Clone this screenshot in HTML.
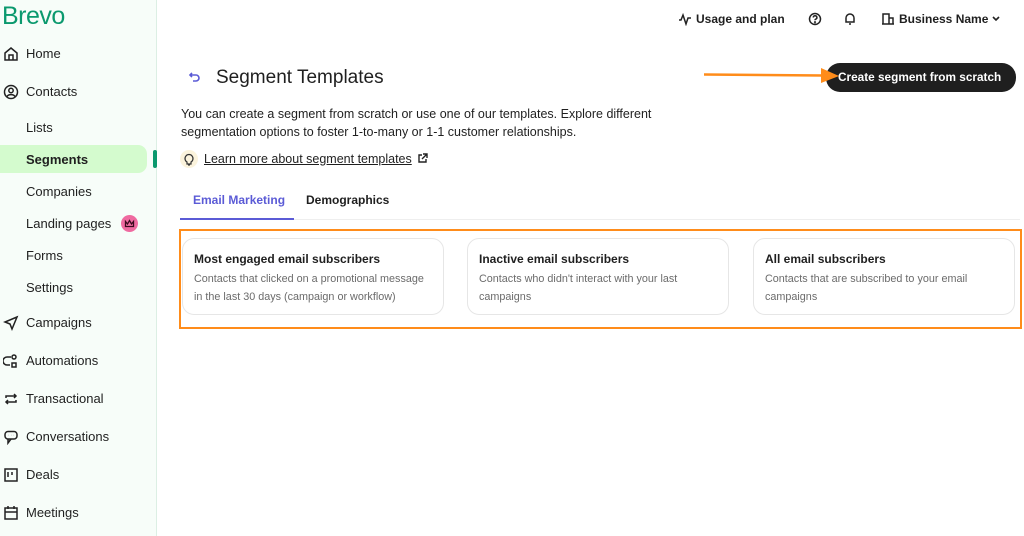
<!DOCTYPE html>
<html><head><meta charset="utf-8"><style>
*{box-sizing:border-box;margin:0;padding:0}
body{width:1024px;height:536px;overflow:hidden;background:#fff;font-family:"Liberation Sans",sans-serif;color:#1f1f1f;position:relative}
.side{position:absolute;left:0;top:0;width:157px;height:536px;background:#f7fdf9;border-right:1px solid #dcefe4}
.logo{position:absolute;left:2px;top:2px;font-size:25px;color:#0b996e;letter-spacing:-0.5px}
.it{position:absolute;left:26px;font-size:13px;color:#1f1f1f}
.ic{position:absolute;left:3px;width:16px;height:16px}
.sel{position:absolute;left:0;top:145px;width:147px;height:28px;background:#d4fbce;border-radius:0 9px 9px 0}
.bar{position:absolute;left:153px;top:150px;width:4px;height:18px;background:#0b996e;border-radius:2px}
.t{position:absolute;white-space:nowrap}
.card{position:absolute;top:238px;width:262px;height:77px;border:1px solid #e6e6e6;border-radius:12px;padding:13px 11px}
.card b{display:block;font-size:12px;color:#1f1f1f;margin-bottom:4px}
.card p{font-size:10.8px;color:#6b6b6b;line-height:18px}
</style></head><body>
<div class="side">
<div class="logo">Brevo</div>
<svg class="ic" style="top:46px" viewBox="0 0 16 16" fill="none" stroke="#222" stroke-width="1.5"><path d="M2 7l6-5 6 5v7H2z"/><path d="M6 14V9h4v5"/></svg>
<div class="it" style="top:46px">Home</div>
<svg class="ic" style="top:84px" viewBox="0 0 16 16" fill="none" stroke="#222" stroke-width="1.5"><circle cx="8" cy="8" r="6.5"/><circle cx="8" cy="6.5" r="2.2"/><path d="M4 12.5c1.5-2.5 6.5-2.5 8 0"/></svg>
<div class="it" style="top:84px">Contacts</div>
<div class="it" style="top:120px">Lists</div>
<div class="sel"></div><div class="bar"></div>
<div class="it" style="top:152px;font-weight:bold">Segments</div>
<div class="it" style="top:184px">Companies</div>
<div class="it" style="top:216px">Landing pages</div>
<div style="position:absolute;left:121px;top:215px;width:17px;height:17px;border-radius:50%;background:#ef6aa0"></div>
<svg style="position:absolute;left:124px;top:219px" width="11" height="9" viewBox="0 0 11 9" fill="none" stroke="#3a0a1e" stroke-width="1.3"><path d="M1.5 7.5h8V2.5L7.5 5 5.5 1.5 3.5 5 1.5 2.5z"/></svg>
<div class="it" style="top:248px">Forms</div>
<div class="it" style="top:280px">Settings</div>
<svg class="ic" style="top:315px" viewBox="0 0 16 16" fill="none" stroke="#222" stroke-width="1.5"><path d="M14 2L2 7l5 2 2 5z"/></svg>
<div class="it" style="top:315px">Campaigns</div>
<svg class="ic" style="top:353px" viewBox="0 0 16 16" fill="none" stroke="#222" stroke-width="1.5"><circle cx="11" cy="4" r="2"/><rect x="9" y="10" width="4" height="4"/><path d="M8 4H4a2 2 0 0 0 0 8h3"/></svg>
<div class="it" style="top:353px">Automations</div>
<svg class="ic" style="top:391px" viewBox="0 0 16 16" fill="none" stroke="#222" stroke-width="1.5"><path d="M3 7V5h10M11 3l2 2-2 2M13 9v2H3M5 13l-2-2 2-2"/></svg>
<div class="it" style="top:391px">Transactional</div>
<svg class="ic" style="top:429px" viewBox="0 0 16 16" fill="none" stroke="#222" stroke-width="1.5"><rect x="2" y="2.5" width="12" height="7.5" rx="3"/><path d="M5 10v4l3-4M5.5 6.2h.1M8 6.2h.1M10.5 6.2h.1"/></svg>
<div class="it" style="top:429px">Conversations</div>
<svg class="ic" style="top:467px" viewBox="0 0 16 16" fill="none" stroke="#222" stroke-width="1.5"><rect x="2" y="2" width="12" height="12"/><path d="M5 5v5M9 5v3"/></svg>
<div class="it" style="top:467px">Deals</div>
<svg class="ic" style="top:505px" viewBox="0 0 16 16" fill="none" stroke="#222" stroke-width="1.5"><rect x="2" y="3" width="12" height="11"/><path d="M2 7h12M5 1v3M11 1v3"/></svg>
<div class="it" style="top:505px">Meetings</div>
</div>

<svg class="t" style="left:678px;top:12px" width="14" height="14" viewBox="0 0 14 14" fill="none" stroke="#222" stroke-width="1.5"><path d="M1 8h2l2-5 3 9 2-6h3"/></svg>
<div class="t" style="left:696px;top:12px;font-size:12px;font-weight:bold">Usage and plan</div>
<svg class="t" style="left:808px;top:12px" width="14" height="14" viewBox="0 0 14 14" fill="none" stroke="#222" stroke-width="1.5"><circle cx="7" cy="7" r="5.5"/><path d="M5.3 5.5a1.8 1.8 0 1 1 2.4 1.7c-.5.2-.7.6-.7 1.1"/><circle cx="7" cy="10.3" r=".4"/></svg>
<svg class="t" style="left:843px;top:12px" width="14" height="14" viewBox="0 0 14 14" fill="none" stroke="#222" stroke-width="1.5"><path d="M3 10V6a4 4 0 0 1 8 0v4H3zM6 12h2"/></svg>
<svg class="t" style="left:881px;top:12px" width="14" height="14" viewBox="0 0 14 14" fill="none" stroke="#222" stroke-width="1.5"><path d="M2 12V2h6v10M8 6h4v6M1 12h12"/></svg>
<div class="t" style="left:899px;top:12px;font-size:12px;font-weight:bold">Business Name</div>
<svg class="t" style="left:991px;top:15px" width="10" height="8" viewBox="0 0 10 8" fill="none" stroke="#222" stroke-width="1.6"><path d="M2 2l3 3 3-3"/></svg>

<svg class="t" style="left:188px;top:71px" width="14" height="12" viewBox="0 0 14 12" fill="none" stroke="#5b5bd6" stroke-width="1.6"><path d="M4 2L2 4l2 2M2 4h6a3 3 0 0 1 0 6H5"/></svg>
<div class="t" style="left:216px;top:67px;font-size:19px;color:#1f1f1f">Segment Templates</div>
<div class="t" style="left:181px;top:105px;font-size:12.5px;line-height:18px">You can create a segment from scratch or use one of our templates. Explore different<br>segmentation options to foster 1-to-many or 1-1 customer relationships.</div>
<div style="position:absolute;left:180px;top:150px;width:18px;height:18px;border-radius:50%;background:#fbf3dc"></div>
<svg class="t" style="left:183px;top:152px" width="12" height="14" viewBox="0 0 12 14" fill="none" stroke="#333" stroke-width="1.2"><path d="M4 10a4 4 0 1 1 4 0v2H4z"/><path d="M5 13h2"/></svg>
<div class="t" style="left:204px;top:152px;font-size:12.5px;text-decoration:underline">Learn more about segment templates</div>
<svg class="t" style="left:417px;top:153px" width="11" height="11" viewBox="0 0 11 11" fill="none" stroke="#222" stroke-width="1.4"><path d="M5 2H2v7h7V6M6 1h4v4M10 1L5 6"/></svg>

<div class="t" style="left:193px;top:193px;font-size:12px;font-weight:bold;color:#5b5bd6">Email Marketing</div>
<div class="t" style="left:306px;top:193px;font-size:12px;font-weight:bold">Demographics</div>
<div style="position:absolute;left:180px;top:219px;width:840px;height:1px;background:#eee"></div>
<div style="position:absolute;left:180px;top:218px;width:114px;height:2px;background:#5b5bd6"></div>

<div style="position:absolute;left:179px;top:229px;width:843px;height:100px;border:2px solid #ff8c1a"></div>
<div class="card" style="left:182px"><b>Most engaged email subscribers</b><p>Contacts that clicked on a promotional message<br>in the last 30 days (campaign or workflow)</p></div>
<div class="card" style="left:467px"><b>Inactive email subscribers</b><p>Contacts who didn't interact with your last<br>campaigns</p></div>
<div class="card" style="left:753px"><b>All email subscribers</b><p>Contacts that are subscribed to your email<br>campaigns</p></div>

<div style="position:absolute;left:826px;top:63px;width:190px;height:29px;border-radius:14px;background:#1f1f1f"></div>
<div class="t" style="left:838px;top:70px;font-size:11.8px;font-weight:bold;color:#fff">Create segment from scratch</div>
<svg class="t" style="left:703px;top:66px" width="140" height="18" viewBox="0 0 140 18"><path d="M1 8.5L120 9.5" stroke="#ff8c1a" stroke-width="2.5"/><path d="M118 2l18 8-18 7z" fill="#ff8c1a"/></svg>
</body></html>
